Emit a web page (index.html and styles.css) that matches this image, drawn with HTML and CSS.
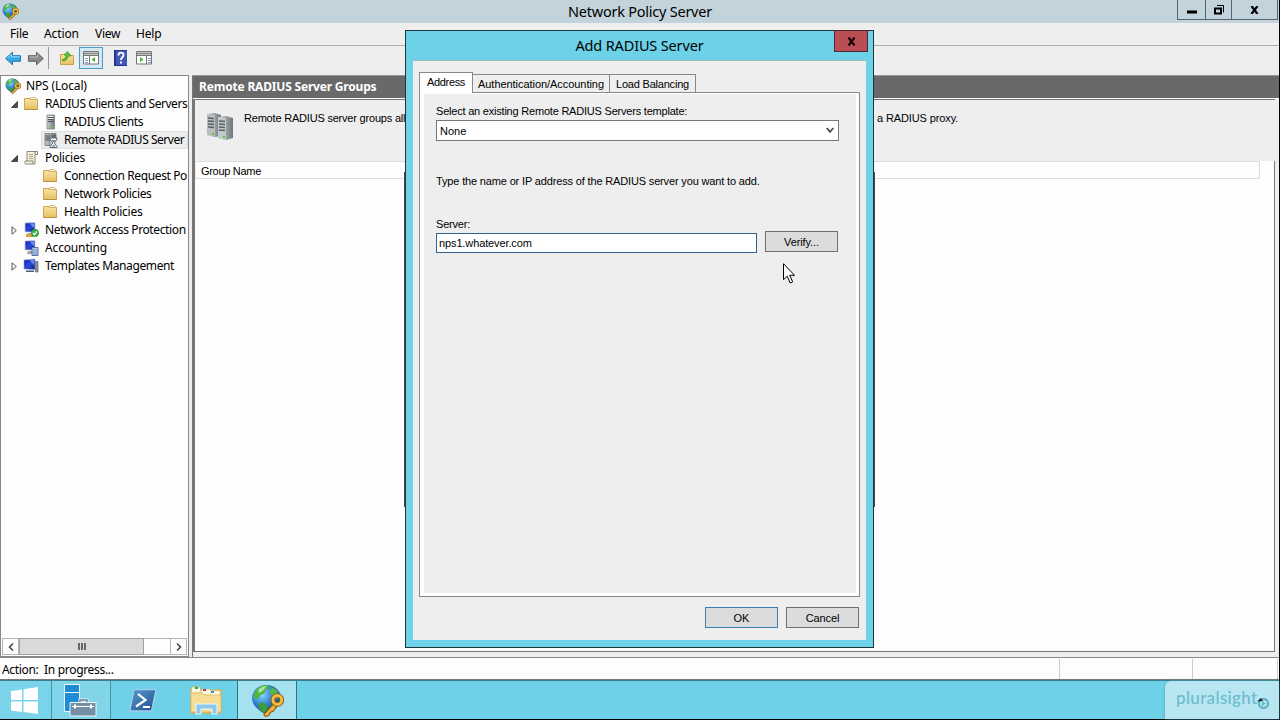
FILE: index.html
```html
<!DOCTYPE html>
<html>
<head>
    <meta charset="utf-8">
    <title>Network Policy Server</title>
    <link rel="stylesheet" href="styles.css">
</head>
<body>
    <svg class="sprite" width="0" height="0">
        <defs>
            <radialGradient id="sea" cx="35%" cy="30%" r="75%">
                <stop offset="0" stop-color="#8fd6fa"/>
                <stop offset="0.5" stop-color="#2c7fd0"/>
                <stop offset="1" stop-color="#12306e"/>
            </radialGradient>
            <linearGradient id="paper" x1="0" y1="0" x2="0" y2="1">
                <stop offset="0" stop-color="#f9e5a5"/>
                <stop offset="1" stop-color="#e5bf62"/>
            </linearGradient>
            <linearGradient id="steel" x1="0" y1="0" x2="1" y2="0">
                <stop offset="0" stop-color="#c9cecf"/>
                <stop offset="1" stop-color="#70787b"/>
            </linearGradient>
            <linearGradient id="screen" x1="0" y1="0" x2="1" y2="1">
                <stop offset="0" stop-color="#0a1a9c"/>
                <stop offset="0.5" stop-color="#2b4be0"/>
                <stop offset="1" stop-color="#0a1580"/>
            </linearGradient>
            <linearGradient id="shell" x1="0" y1="0" x2="1" y2="1">
                <stop offset="0" stop-color="#5b9bd0"/>
                <stop offset="1" stop-color="#1d4f8c"/>
            </linearGradient>
        </defs>
        <symbol id="globe" viewBox="0 0 32 32">
            <path d="M15 1c8 0 14 6 14 13 0 8-9 12-13 17C10 27 1 22 1 14 1 6 7 1 15 1z" fill="url(#sea)"/>
            <path d="M3 10C5 4 10 1 16 1l2 3-4 1-1 4-4 2-2 3-4 0z" fill="#4fb53b"/>
            <path d="M7 19l5-1 4 3-1 5-3 2-4-4z" fill="#3f9e35"/>
            <path d="M20 3l5 3 3 6-3 3-4-3-3-4z" fill="#54b848"/>
            <path d="M7 6c2-3 5-4 8-4l-3 4-4 3z" fill="#d5f5d0" opacity="0.700"/>
            <path d="M22.500 18.500L12.500 29.500l1.500 2 3.500-1 1-3 3-1 4-5.500z" fill="#f0b332" stroke="#8b5a10" stroke-width="1"/>
            <circle cx="25.500" cy="15.500" r="4.300" fill="none" stroke="#8b5a10" stroke-width="4.600"/>
            <circle cx="25.500" cy="15.500" r="4.300" fill="none" stroke="#f4bd45" stroke-width="2.800"/>
        </symbol>
        <symbol id="folder" viewBox="0 0 16 16">
            <path d="M1.500 2.500h7l1 1h5v10h-13z" fill="url(#paper)" stroke="#cda64f"/>
            <path d="M7 3.500l1-2h4.500l1 2z" fill="#fff" stroke="#cda64f" stroke-width="0.800"/>
            <path d="M1.500 13.500h13" stroke="#b98f3d"/>
        </symbol>
        <symbol id="server" viewBox="0 0 16 16">
            <path d="M5 1h7.500v14H5z" fill="url(#steel)" stroke="#798184" stroke-width="0.700"/>
            <path d="M6 3.500h5.500M6 5.500h5.500M6 7.500h5.500" stroke="#4c5558"/>
            <path d="M6 2.500h5.500M6 4.500h5.500" stroke="#eef1f1"/>
            <path d="M10 12h2v2h-2z" fill="#55c335"/>
        </symbol>
        <symbol id="group" viewBox="0 0 16 16">
            <path d="M3 1.500h5v12H3zM9 1.500h5v6H9z" fill="url(#steel)" stroke="#6b7376" stroke-width="0.800"/>
            <path d="M3.500 4h4M3.500 6h4M3.500 8h4M9.500 4h4" stroke="#3f484b"/>
            <path d="M8 6h7v1l-2.700 4 2.700 3.500v1H8v-1l2.700-3.500L8 7z" fill="#fff" stroke="#5d6466"/>
            <path d="M9.500 8h4l-2 2.500zM9.500 14.500l2-2 2 2z" fill="#4b7ec0"/>
        </symbol>
        <symbol id="scroll" viewBox="0 0 16 16">
            <path d="M4 1.500h10.500v3H12v9.500H3c-2 0-2-3 0-3h1z" fill="#f5f0de" stroke="#8d8873"/>
            <path d="M12 4V2M3 11h7v3" fill="none" stroke="#8d8873"/>
            <path d="M6 4.500h4M6 6.500h4M6 8.500h4" stroke="#aaa48c"/>
        </symbol>
        <symbol id="monitor" viewBox="0 0 16 16">
            <path d="M2 1l10-.5V10L2 10z" fill="url(#screen)" stroke="#c6ccd4" stroke-width="0.800"/>
            <path d="M7 1.500l4 0v5z" fill="#6c8df4"/>
            <path d="M5 11h5l2 3H4z" fill="#9fa6ad"/>
        </symbol>
        <symbol id="access" viewBox="0 0 16 16">
            <use href="#monitor"/>
            <path d="M3 12h7v3H3z" fill="#d8a23a"/>
            <circle cx="12" cy="11" r="3.800" fill="#39ab45" stroke="#258530" stroke-width="0.500"/>
            <path d="M10 11l1.500 1.800L14 9.300" fill="none" stroke="#fff" stroke-width="1.200"/>
        </symbol>
        <symbol id="account" viewBox="0 0 16 16">
            <use href="#monitor"/>
            <path d="M9 7.500h6v8H9z" fill="#b9cbe8" stroke="#5471a5"/>
            <path d="M10 10h4M10 12h4M10 14h4" stroke="#6b87ba" stroke-width="0.800"/>
        </symbol>
        <symbol id="template" viewBox="0 0 16 16">
            <path d="M1 2l11-1v10.500L1 11z" fill="url(#screen)" stroke="#9aa3b5" stroke-width="0.600"/>
            <path d="M7 2l4-.3v5.500z" fill="#6c8df4"/>
            <path d="M12.500 3.500h2.500V14h-2.500z" fill="#8d959b" stroke="#4e565b" stroke-width="0.600"/>
            <path d="M3 12.500h8V14H3z" fill="#4b5a80"/>
        </symbol>
        <symbol id="open" viewBox="0 0 7 7"><path d="M6.500.5v6h-6z" fill="#4a4a4a" stroke="#222" stroke-width="0.700"/></symbol>
        <symbol id="closed" viewBox="0 0 7 9"><path d="M1 .8l4.300 3.700L1 8.200z" fill="#fff" stroke="#555"/></symbol>
    </svg>

    <div class="window">
        <div class="titlebar">
            <svg class="app-icon" width="17" height="17"><use href="#globe"/></svg>
            <h1>Network Policy Server</h1>
            <div class="controls">
                <span class="min"><svg width="10" height="10"><path d="M0 5.500h10v3H0z"/></svg></span>
                <span class="max"><svg width="10" height="10"><path d="M1 3.500h6v5H1z" fill="none" stroke="#000" stroke-width="2"/><path d="M3 .5h6.500v7" fill="none" stroke="#000"/></svg></span>
                <span class="exit"><svg width="9" height="8"><path d="M1.500 0L7.500 8M7.500 0L1.500 8" stroke="#000" stroke-width="2.200"/></svg></span>
            </div>
        </div>
        <div class="menu">
            <span class="m-file">File</span>
            <span class="m-action">Action</span>
            <span class="m-view">View</span>
            <span class="m-help">Help</span>
        </div>
        <div class="toolbar">
            <svg width="16" height="15"><path d="M.7 7.500L7.500 1.200v3.500h8v5.600h-8v3.500z" fill="#35a8e4" stroke="#2573ad"/><path d="M2.500 7l4-3.500v2.300h8" fill="none" stroke="#9ce0fb"/></svg>
            <svg class="fwd" width="16" height="15"><path d="M15.300 7.500L8.500 1.200v3.500h-8v5.600h8v3.500z" fill="#8b8b8b" stroke="#5f5f5f"/><path d="M1.500 6h8V3.500" fill="none" stroke="#bbb"/></svg>
            <i class="bar"></i>
            <svg class="up" width="16" height="16"><path d="M1.500 4.500h5l1 1h7v9h-13z" fill="url(#paper)" stroke="#caa049"/><path d="M5 11c3-1 4-3 4-5h3L8.500 1.500 5 5h2c0 3-1 4-4 5z" fill="#5ccb35" stroke="#318d1c" stroke-width="0.700"/></svg>
            <span class="pressed"><svg width="16" height="14"><path d="M.5.5h15v12.500H.5z" fill="#fff" stroke="#777"/><path d="M1 2.500h14" stroke="#898989" stroke-width="2"/><path d="M1 4.500h14M6.500 5v8" stroke="#777"/><path d="M2 7.500h3M2 9.500h3M2 11.500h3" stroke="#7d9ccc"/><path d="M12 6v5L8.500 8.500z" fill="#42b82b"/></svg></span>
            <svg class="book" width="13" height="16"><path d="M0 0h13v16H0z" fill="#24378c"/><path d="M2 1h11v14H2z" fill="#4057b8"/><path d="M4.500 5.500c0-4 5-3.500 5-.5 0 2.500-2.500 2-2.500 5M7 11.500v2" fill="none" stroke="#fff" stroke-width="1.900"/></svg>
            <svg class="pane" width="16" height="14"><path d="M.5.5h15v12.500H.5z" fill="#fff" stroke="#777"/><path d="M1 2.500h14" stroke="#898989" stroke-width="2"/><path d="M1 4.500h14M10.500 5v8" stroke="#777"/><path d="M12 7.500h3M12 9.500h3M12 11.500h3" stroke="#7d9ccc"/><path d="M4 6v5l3.500-2.500z" fill="#42b82b"/></svg>
        </div>

        <div class="main">
            <div class="left">
                <div class="tree">
                    <div class="row root"><svg width="16" height="16"><use href="#globe"/></svg><span class="t-nps">NPS (Local)</span></div>
                    <div class="row one"><b><svg width="7" height="7"><use href="#open"/></svg></b><svg width="16" height="16"><use href="#folder"/></svg><span class="t-rcs">RADIUS Clients and Servers</span></div>
                    <div class="row two"><svg width="16" height="16"><use href="#server"/></svg><span class="t-rc">RADIUS Clients</span></div>
                    <div class="row two selected"><svg width="16" height="16"><use href="#group"/></svg><span class="t-rrs">Remote RADIUS Server</span></div>
                    <div class="row one"><b><svg width="7" height="7"><use href="#open"/></svg></b><svg width="16" height="16"><use href="#scroll"/></svg><span class="t-pol">Policies</span></div>
                    <div class="row two"><svg width="16" height="16"><use href="#folder"/></svg><span class="t-crp">Connection Request Po</span></div>
                    <div class="row two"><svg width="16" height="16"><use href="#folder"/></svg><span class="t-np">Network Policies</span></div>
                    <div class="row two"><svg width="16" height="16"><use href="#folder"/></svg><span class="t-hp">Health Policies</span></div>
                    <div class="row one"><b><svg width="7" height="9"><use href="#closed"/></svg></b><svg width="16" height="16"><use href="#access"/></svg><span class="t-nap">Network Access Protection</span></div>
                    <div class="row one"><b></b><svg width="16" height="16"><use href="#account"/></svg><span class="t-acc">Accounting</span></div>
                    <div class="row one"><b><svg width="7" height="9"><use href="#closed"/></svg></b><svg width="16" height="16"><use href="#template"/></svg><span class="t-tm">Templates Management</span></div>
                </div>
                <div class="hscroll">
                    <span class="arrow"><svg width="6" height="8"><path d="M5 .5L1.500 4 5 7.500" fill="none" stroke="#444" stroke-width="1.500"/></svg></span>
                    <span class="thumb"><svg width="8" height="7"><path d="M1 0v7M4 0v7M7 0v7" stroke="#555" stroke-width="1.700"/></svg></span>
                    <span class="track"></span>
                    <span class="arrow"><svg width="6" height="8"><path d="M1 .5L4.500 4 1 7.500" fill="none" stroke="#444" stroke-width="1.500"/></svg></span>
                </div>
            </div>
            <div class="right">
                <h2><span>Remote RADIUS Server Groups</span></h2>
                <div class="content">
                    <div class="intro">
                        <svg width="28" height="28" viewBox="0 0 28 28">
                            <path d="M1 2l8-1 6 2v21l-6 1-8-2z" fill="url(#steel)"/>
                            <path d="M1 2l8 1v22l-8-2z" fill="#b9bfc1"/>
                            <path d="M2 6l6 .5M2 9l6 .5M2 12l6 .5M2 15l6 .5" stroke="#596164" stroke-width="1.300"/>
                            <path d="M12 5l8-1 7 2v20l-7 2-8-2z" fill="url(#steel)"/>
                            <path d="M12 5l8 1v22l-8-2z" fill="#c3c8ca"/>
                            <path d="M13 9l6 .5M13 12l6 .5M13 15l6 .5M13 18l6 .5" stroke="#596164" stroke-width="1.300"/>
                            <path d="M6 21h2v2H6zM17 24h2v2h-2z" fill="#4fd01f"/>
                        </svg>
                        <p><span class="lead">Remote RADIUS server groups all</span><span class="tail">a RADIUS proxy.</span></p>
                    </div>
                    <div class="list"><div class="head"><span>Group Name</span></div></div>
                </div>
            </div>
        </div>

        <div class="status"><span class="s-text">Action:&nbsp; In progress...</span><i class="cell-a"></i><i class="cell-b"></i></div>

        <div class="taskbar">
            <span class="task start"><svg width="27" height="27"><path d="M0 4l11-1.600V13H0zM12.500 2.200L27 0v13H12.500zM0 14.500h11v10.400L0 23.400zM12.500 14.500H27V27l-14.500-2z" fill="#fff"/></svg></span>
            <span class="task manager"><svg width="33" height="33"><path d="M.5.5h15v27H.5z" fill="#1f8bd4" stroke="#e8f7fc"/><path d="M1 8.500h14" stroke="#e8f7fc"/><path d="M16 19v-3h7v3" fill="none" stroke="#e8f7fc" stroke-width="3"/><path d="M16 19v-3h7v3" fill="none" stroke="#6b8498" stroke-width="1.600"/><path d="M6 18.500h26V32H6z" fill="#7590a6" stroke="#e8f7fc"/><path d="M8 22.500h22" stroke="#fff"/><path d="M11 20.500v4M27 20.500v4" stroke="#fff" stroke-width="2"/></svg></span>
            <span class="task ps"><svg width="28" height="23"><path d="M5 .7h22L22.500 22H.7z" fill="url(#shell)" stroke="#a3cdea" stroke-width="1.300"/><path d="M9 5l7.500 6L7 17.500M14 18h7" fill="none" stroke="#fff" stroke-width="2.200"/></svg></span>
            <span class="task explorer"><svg width="33" height="30"><path d="M1 4l1-2h7l1 3h21v23H1z" fill="url(#paper)" stroke="#d5aa4c"/><path d="M2 2.500h8V7H2zM12 4.500h8V9h-8zM21 6.500h8V11h-8z" fill="#fdf8e6"/><path d="M5 2h3v2H5z" fill="#2fb03a"/><path d="M13 4h3v2h-3z" fill="#d2352f"/><path d="M21 6h3v2h-3z" fill="#3292d8"/><path d="M1 8h11l2 2h17v17H1z" fill="#f7dd96" stroke="#dcb864" stroke-width="0.700"/><path d="M6 29V19h21v10h-5v-5H11v5z" fill="#8acbed" stroke="#e7f7ff"/></svg></span>
            <span class="task active"><svg width="33" height="33"><use href="#globe"/></svg></span>
            <div class="brand"><span>pluralsight</span><svg width="13" height="13"><circle cx="6.500" cy="6.500" r="4.500" fill="#c4eaf3" stroke="#62b5c6" stroke-width="2.400"/><path d="M5 4l4 2.500L5 9z" fill="#62b5c6"/><path d="M0 4.500L4 1l2 3z" fill="#1d2528"/></svg></div>
        </div>
    </div>

    <div class="behind"></div>
    <div class="dialog">
        <div class="caption">Add RADIUS Server</div>
        <span class="close"><svg width="9" height="9"><path d="M1.500 .5L7.500 8.500M7.500 .5L1.500 8.500" stroke="#1a0000" stroke-width="2.200"/></svg></span>
        <div class="client">
            <div class="tabs">
                <span class="tab current"><em class="d-addr">Address</em></span>
                <span class="tab auth"><em class="d-auth">Authentication/Accounting</em></span>
                <span class="tab load"><em class="d-load">Load Balancing</em></span>
            </div>
            <div class="sheet">
                <label class="l-template"><em class="d-sel">Select an existing Remote RADIUS Servers template:</em></label>
                <div class="combo"><em>None</em><svg width="8" height="7"><path d="M.7 1L4 4.800 7.300 1" fill="none" stroke="#4d4d4d" stroke-width="1.800"/></svg></div>
                <p class="hint"><em class="d-hint">Type the name or IP address of the RADIUS server you want to add.</em></p>
                <label class="l-server"><em class="d-sel">Server:</em></label>
                <div class="line">
                    <div class="field"><em class="d-host">nps1.whatever.com</em></div>
                    <div class="button"><em class="d-ver">Verify...</em></div>
                </div>
            </div>
            <div class="buttons">
                <div class="button ok"><em>OK</em></div>
                <div class="button"><em class="d-ver">Cancel</em></div>
            </div>
        </div>
    </div>
    <svg class="cursor" width="12" height="21"><path d="M.5.7v16l3.700-3.500 3 6.800 2.500-1.100-3-6.600h4.800z" fill="#fff" stroke="#000"/></svg>
</body>
</html>
```
FILE: styles.css
```css
*
{
    margin: 0;
    padding: 0;
    box-sizing: border-box;
}
body
{
    width: 1280px;
    height: 720px;
    overflow: hidden;
    font-family: "Noto Sans", "Open Sans", sans-serif;
    font-size: 12px;
    color: #000;
}
svg
{
    display: block;
    flex: none;
}
.sprite
{
    position: absolute;
}
span, em
{
    white-space: nowrap;
}
em
{
    font-style: normal;
}
.window
{
    display: flex;
    flex-direction: column;
    width: 1280px;
    height: 720px;
    background: #eee;
    border-right: 1px solid #000;
    border-bottom: 1px solid #000;
}
.titlebar
{
    display: grid;
    grid-template-columns: 103px 1fr 102px;
    height: 23px;
    background: #c3d3dc;
}
.app-icon
{
    margin: 3px 0 0 2px;
}
.titlebar h1
{
    font-size: 14.5px;
    font-weight: normal;
    line-height: 23px;
    text-align: center;
    letter-spacing: -0.24px;
}
.controls
{
    display: flex;
    width: 101px;
    height: 20px;
    border: 1px solid #59636b;
    border-top: 0;
}
.controls span
{
    display: flex;
    justify-content: center;
    align-items: center;
    border-left: 1px solid #59636b;
}
.controls .min
{
    width: 27px;
    border: 0;
}
.max
{
    width: 26px;
}
.exit
{
    flex: 1;
}
.menu
{
    display: flex;
    height: 23px;
    line-height: 22px;
    padding-left: 10px;
    border-bottom: 1px solid #b0acb0;
}
.m-file
{
    width: 34px;
    letter-spacing: -0.2px;
}
.m-action
{
    width: 51px;
    letter-spacing: -0.1px;
}
.m-view
{
    width: 41px;
    letter-spacing: -0.3px;
}
.m-help
{
    letter-spacing: -0.2px;
}
.toolbar
{
    display: flex;
    align-items: center;
    height: 29px;
    padding: 0 0 5px 5px;
}
.fwd
{
    margin-left: 7px;
}
.bar
{
    width: 1px;
    height: 22px;
    margin-left: 4px;
    background: #999;
}
.up
{
    margin-left: 10px;
}
.pressed
{
    display: flex;
    justify-content: center;
    align-items: center;
    width: 24px;
    height: 22px;
    margin-left: 4px;
    border: 1px solid #4a9fc8;
    background: #d3eaf6;
}
.book
{
    margin-left: 11px;
}
.pane
{
    margin-left: 9px;
}
.main
{
    display: flex;
    gap: 3px;
    height: 582px;
}
.left
{
    display: flex;
    flex-direction: column;
    width: 189px;
    border: 1px solid #888;
    background: #fdfdfd;
}
.tree
{
    flex: 1;
    padding-top: 1px;
    overflow: hidden;
}
.row
{
    display: flex;
    align-items: center;
    height: 18px;
    line-height: 18px;
    letter-spacing: -0.38px;
}
.root
{
    padding-left: 4px;
}
.root span
{
    margin-left: 5px;
}
.one
{
    padding-left: 10px;
}
.one b
{
    flex: none;
    width: 12px;
}
.row.one span
{
    margin-left: 6px;
}
.two
{
    padding-left: 1px;
    margin-left: 40px;
}
.two span
{
    margin-left: 6px;
}
.selected
{
    background: #ededed;
    border: 1px solid #dedede;
    padding-left: 0;
}
.t-nps, .t-acc
{
    letter-spacing: -0.15px;
}
.t-pol, .t-hp
{
    letter-spacing: -0.27px;
}
.t-rcs, .t-rrs
{
    letter-spacing: -0.46px;
}
.hscroll
{
    display: flex;
    height: 17px;
    margin: 0 1px 1px;
}
.hscroll span
{
    display: flex;
    justify-content: center;
    align-items: center;
    border: 1px solid #b5b5b5;
}
.hscroll .arrow
{
    width: 17px;
}
.hscroll .thumb
{
    width: 125px;
    background: #dadada;
    border-color: #a0a0a0;
}
.hscroll .track
{
    flex: 1;
    border-width: 1px 0;
}
.right
{
    flex: 1;
    border-left: 1px solid #777;
    border-top: 1px solid #999;
}
.right h2
{
    height: 23px;
    padding-left: 6px;
    line-height: 22px;
    font-size: 12px;
    letter-spacing: -0.19px;
    color: #fff;
    background: #696969;
    border-bottom: 1px solid #fff;
}
.content
{
    height: 553px;
    margin-right: 4px;
    border: 1px solid #777;
    border-left-width: 2px;
    border-right: 0;
}
.intro
{
    display: flex;
    height: 61px;
    padding: 12px 0 0 11px;
    font: 11px "Liberation Sans", sans-serif;
}
.intro p
{
    display: flex;
    margin-left: 10px;
    line-height: 12px;
}
.lead
{
    width: 633px;
    letter-spacing: -0.2px;
}
.tail
{
    letter-spacing: -0.12px;
}
.list
{
    height: 490px;
    background: #fdfdfd;
    border-right: 1px solid #777;
}
.head
{
    width: 1065px;
    height: 18px;
    padding-left: 5px;
    font: 11px/18px "Liberation Sans", sans-serif;
    letter-spacing: -0.3px;
    border: 1px solid #ddd;
    border-left-color: #e8e8e8;
}
.status
{
    display: flex;
    height: 23px;
    padding-left: 2px;
    line-height: 24px;
    background: #fdfdfd;
    border-top: 1px solid #888;
    border-bottom: 1px solid #777;
}
.s-text
{
    width: 1057px;
    letter-spacing: -0.32px;
}
.status i
{
    height: 20px;
    margin-top: 1px;
    border-left: 1px solid #ccc;
}
.cell-a
{
    width: 133px;
}
.cell-b
{
    width: 86px;
    border-right: 1px solid #ccc;
}
.taskbar
{
    display: flex;
    flex: 1;
    background: #6dd1e7;
    border-top: 1px solid #3b7e8d;
}
.task
{
    display: flex;
    justify-content: center;
    align-items: center;
}
.start
{
    width: 52px;
    padding-right: 2px;
    border-right: 1px solid #3f96ab;
    background: #7ad4e9;
}
.manager
{
    width: 59px;
    padding-right: 2px;
    background: #82d5e9;
    border-right: 1px solid #3f96ab;
}
.ps
{
    width: 64px;
}
.explorer
{
    width: 62px;
}
.active
{
    width: 60px;
    background: #a6e1ef;
    border: 1px solid #35707e;
    border-width: 0 1px;
}
.brand
{
    display: flex;
    width: 114px;
    margin-left: auto;
    padding: 8px 0 0 11px;
    line-height: 17px;
    font-family: Lato, sans-serif;
    font-size: 17px;
    font-weight: 500;
    letter-spacing: 0.35px;
    color: #6abccd;
    background: #b8e7f2;
    border-radius: 6px 0 0 0;
    box-shadow: 0 0 3px #4b9fb1;
}
.brand span
{
    width: 81px;
}
.brand svg
{
    margin-top: 8px;
}
.behind
{
    position: absolute;
    left: 404px;
    top: 172px;
    width: 471px;
    height: 335px;
    background: #444c50;
}
.dialog
{
    position: absolute;
    left: 405px;
    top: 30px;
    width: 469px;
    height: 618px;
    padding: 0 7px 7px;
    border: 1px solid #20343a;
    background: #6dd1e7;
    font: 11px "Liberation Sans", sans-serif;
}
.caption
{
    height: 29px;
    line-height: 29px;
    font-family: "Noto Sans", "Open Sans", sans-serif;
    font-size: 14.5px;
    text-align: center;
    letter-spacing: -0.15px;
}
.close
{
    position: absolute;
    right: 5px;
    top: -1px;
    display: flex;
    justify-content: center;
    align-items: center;
    width: 34px;
    height: 22px;
    background: #b94f55;
    border: 1px solid #4a2a32;
}
.client
{
    height: 580px;
    padding: 11px 6px 0;
    background: #eee;
    border-top: 1px solid #9ab9c0;
}
.tabs
{
    display: flex;
    align-items: flex-end;
    height: 20px;
    padding-top: 1px;
}
.tab
{
    height: 18px;
    line-height: 18px;
    text-align: center;
    border: 1px solid #888;
    border-bottom: 0;
    border-left: 0;
}
.current
{
    position: relative;
    width: 54px;
    height: 21px;
    margin-bottom: -1px;
    border-left: 1px solid #888;
    background: #fff;
}
.auth
{
    width: 137px;
}
.load
{
    width: 86px;
}
.d-addr
{
    letter-spacing: -0.35px;
}
.d-auth
{
    letter-spacing: -0.05px;
}
.d-load, .d-sel
{
    letter-spacing: -0.21px;
}
.d-hint
{
    letter-spacing: -0.155px;
}
.d-host, .d-ver
{
    letter-spacing: -0.12px;
}
.sheet
{
    height: 505px;
    padding: 11px 15px 0 12px;
    border: 1px solid #888;
    box-shadow: inset 4px 0 #fff, inset -3px 0 #fff, inset 0 1px #fff, inset 0 -3px #fff;
}
.sheet label
{
    display: block;
    line-height: 14px;
    margin-left: 4px;
}
.combo
{
    display: flex;
    justify-content: space-between;
    align-items: center;
    height: 21px;
    margin: 2px 5px 0 4px;
    padding: 0 4px 0 3px;
    border: 1px solid #777;
    background: #fff;
}
.hint
{
    margin: 33px 0 0 4px;
    line-height: 14px;
}
.sheet .l-server
{
    margin-top: 29px;
}
.line
{
    display: flex;
    gap: 8px;
    margin-left: 4px;
}
.field
{
    width: 321px;
    height: 20px;
    margin-top: 2px;
    padding-left: 2px;
    line-height: 18px;
    border: 1px solid #2f628c;
    background: #fff;
}
.button
{
    width: 73px;
    height: 21px;
    line-height: 20px;
    text-align: center;
    border: 1px solid #707070;
    background: #dcdcdc;
}
.buttons
{
    display: flex;
    justify-content: flex-end;
    gap: 8px;
    margin-top: 10px;
    padding-right: 1px;
}
.ok
{
    border-color: #3c7fb1;
}
.cursor
{
    position: absolute;
    left: 783px;
    top: 263px;
}
```
